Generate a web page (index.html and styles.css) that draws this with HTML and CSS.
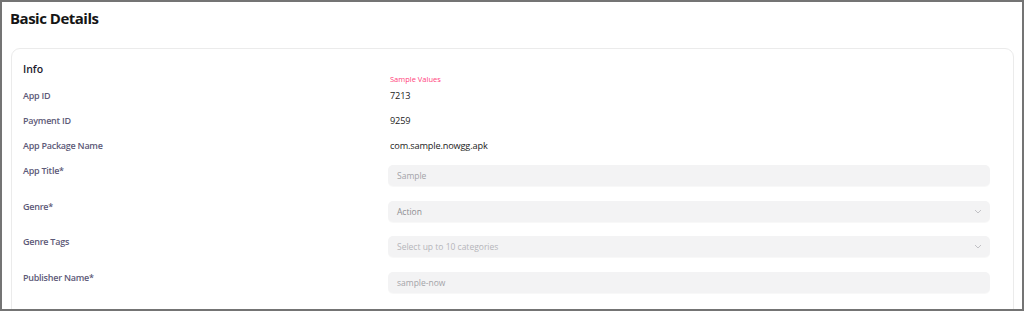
FILE: index.html
```html
<!DOCTYPE html>
<html>
<head>
<meta charset="utf-8">
<link rel="stylesheet" href="styles.css">
</head>
<body>
<div class="frame">
  <h1 class="page-title">Basic Details</h1>
  <div class="card">
    <div class="section-title">Info</div>
    <div class="row sample-row"><div></div><div class="sample">Sample Values</div></div>
    <div class="row info-row"><div class="label">App ID</div><div class="value">7213</div></div>
    <div class="row info-row"><div class="label">Payment ID</div><div class="value">9259</div></div>
    <div class="row info-row"><div class="label">App Package Name</div><div class="value">com.sample.nowgg.apk</div></div>
    <div class="fields">
      <div class="row field-row"><div class="label">App Title*</div><div class="input"><span class="ph">Sample</span></div></div>
      <div class="row field-row"><div class="label">Genre*</div><div class="input select"><span class="val">Action</span><svg class="chev" viewBox="0 0 8 5" width="8" height="5"><path d="M1 1l3 3 3-3" fill="none" stroke="#c2c2c6" stroke-width="1"/></svg></div></div>
      <div class="row field-row"><div class="label">Genre Tags</div><div class="input select"><span class="ph light">Select up to 10 categories</span><svg class="chev" viewBox="0 0 8 5" width="8" height="5"><path d="M1 1l3 3 3-3" fill="none" stroke="#c2c2c6" stroke-width="1"/></svg></div></div>
      <div class="row field-row"><div class="label">Publisher Name*</div><div class="input"><span class="ph">sample-now</span></div></div>
    </div>
  </div>
</div>
</body>
</html>
```

FILE: styles.css
```css
* { box-sizing: border-box; }
html, body { margin: 0; padding: 0; background: #fff; }
body { font-family: "Open Sans", "DejaVu Sans", sans-serif; }
.frame {
  width: 1024px;
  height: 311px;
  border: 2px solid #747474;
  overflow: hidden;
  background: #fff;
}
.page-title {
  margin: 0;
  padding: 6px 0 0 8px;
  height: 46px;
  font-size: 15px;
  font-weight: 700;
  color: #151515;
  letter-spacing: -0.5px;
  line-height: 20px;
}
.card {
  margin: 0 8px 0 9px;
  border: 1px solid #ebebeb;
  border-radius: 9px;
  padding: 13px 23px 20px 11px;
  height: 300px;
}
.section-title {
  font-size: 10.5px;
  font-weight: 600;
  color: #1c1b2e;
  line-height: 14px;
}
.row {
  display: grid;
  grid-template-columns: 365px 1fr;
  align-items: center;
}
.sample-row { height: 7px; line-height: 7px; }
.sample {
  font-size: 7.5px;
  color: #ff3f7c;
  padding-left: 2px;
}
.info-row { height: 25px; }
.label {
  font-size: 9px;
  font-weight: 600;
  color: #5d5a78;
  letter-spacing: -0.25px;
}
.value {
  font-size: 9.2px;
  color: #222;
  padding-left: 2px;
  letter-spacing: -0.15px;
}
.fields {
  margin-top: 7px;
  display: flex;
  flex-direction: column;
  gap: 14.5px;
}
.field-row { align-items: start; }
.field-row .label { line-height: 12px; }
.input {
  height: 21px;
  background: #f3f3f4;
  border-radius: 5px;
  box-shadow: 0 1px 1px rgba(0,0,0,0.03);
  display: flex;
  align-items: center;
  justify-content: space-between;
  padding: 0 9px 0 9px;
  font-size: 8.5px;
}
.ph { color: #a3a3a8; }
.ph.light { color: #b5b5ba; }
.val { color: #8d8d92; }
.chev { display: block; margin-right: -1px; }
```
